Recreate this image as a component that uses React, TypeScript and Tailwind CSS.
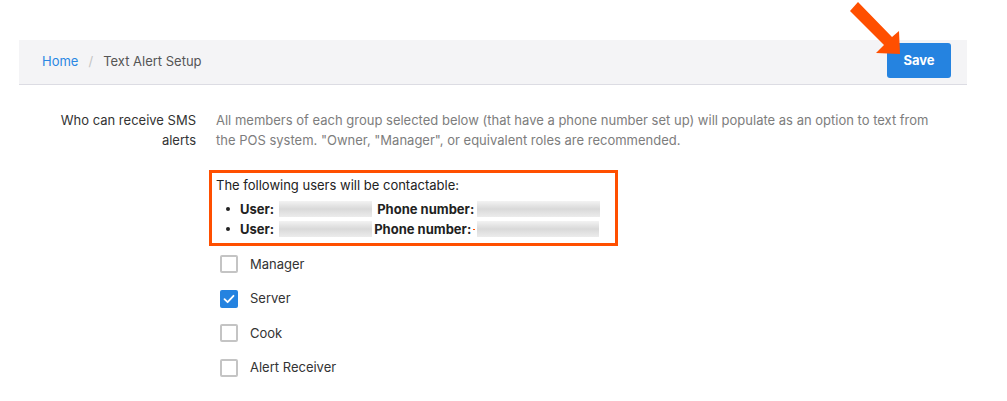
import React from "react";

function Bar({ w }: { w: number }) {
  return (
    <span
      className="inline-block h-[16px] align-middle bg-gradient-to-b from-[#f3f3f3] via-[#d9d9d9] to-[#ececec]"
      style={{ width: w }}
    />
  );
}

function Checkbox({ checked }: { checked?: boolean }) {
  if (checked) {
    return (
      <span className="w-[18px] h-[18px] rounded-[2px] bg-[#2583e0] flex items-center justify-center">
        <svg width="12" height="10" viewBox="0 0 12 10" fill="none">
          <path d="M1.5 5.2 L4.6 8.2 L10.5 1.8" stroke="white" strokeWidth="1.8" strokeLinecap="round" strokeLinejoin="round" />
        </svg>
      </span>
    );
  }
  return <span className="w-[18px] h-[18px] rounded-[2px] border-2 border-[#c4c4c4] bg-white" />;
}

export default function App() {
  const groups = [
    { name: "Manager", checked: false },
    { name: "Server", checked: true },
    { name: "Cook", checked: false },
    { name: "Alert Receiver", checked: false },
  ];
  return (
    <div className="relative w-[1007px] h-[401px] bg-white overflow-hidden font-['Inter',sans-serif] pt-[40px]">
      <div className="ml-[19px] w-[948px] h-[45px] bg-[#f4f4f6] border-b border-[#dcdce3] flex items-start justify-between pl-[23px] pr-[16px]">
        <div className="h-[43px] flex items-center text-[13px] gap-[10px]">
          <span className="text-[#2b87e3]">Home</span>
          <span className="text-[#c4c4c4]">/</span>
          <span className="text-[#555]">Text Alert Setup</span>
        </div>
        <button className="mt-[3px] w-[64px] h-[35px] rounded-[3px] bg-[#2583e0] text-white text-[13px] font-bold">
          Save
        </button>
      </div>

      <div className="ml-[40px] mt-[25px] flex gap-[20px]">
        <div className="w-[156px] text-right text-[13px] leading-[20px] text-[#333]">
          Who can receive SMS alerts
        </div>
        <div className="w-[730px]">
          <p className="text-[13px] leading-[20px] text-[#7d7d7d]">
            All members of each group selected below (that have a phone number set up) will populate as an option to text from the POS system. "Owner, "Manager", or equivalent roles are recommended.
          </p>
          <div className="mt-[20px] -ml-[7px] w-[409px] border-[3px] border-[#ff4f00] pl-[4px] pt-[3px] pb-[4px] text-[13px] text-[#222]">
            <div className="leading-[18px]">The following users will be contactable:</div>
            <ul className="mt-[5px] pl-[10px] font-bold leading-[20px]">
              <li className="flex items-center">
                <span className="w-[4px] h-[4px] rounded-full bg-[#222] mr-[10px]" />
                <span className="mr-[5px]">User:</span>
                <Bar w={93} />
                <span className="ml-[5px] mr-[3px]">Phone number:</span>
                <Bar w={123} />
              </li>
              <li className="flex items-center">
                <span className="w-[4px] h-[4px] rounded-full bg-[#222] mr-[10px]" />
                <span className="mr-[5px]">User:</span>
                <Bar w={93} />
                <span className="ml-[2px] mr-[2px]">Phone number:</span>
                <span className="w-[2px] h-[1px] bg-[#ff4f00] mr-[2px]" />
                <Bar w={122} />
              </li>
            </ul>
          </div>
          <div className="mt-[1px] ml-[4px] flex flex-col">
            {groups.map((g) => (
              <label key={g.name} className="h-[34.6px] flex items-center gap-[12px] text-[13px] text-[#333]">
                <Checkbox checked={g.checked} />
                <span>{g.name}</span>
              </label>
            ))}
          </div>
        </div>
      </div>

      <svg className="absolute left-0 top-0" width="1007" height="401" viewBox="0 0 1007 401">
        <polygon points="850,11 858,2 892,37 899,31 900,54 876,53 884,45" fill="#ff4f00" />
      </svg>
    </div>
  );
}
